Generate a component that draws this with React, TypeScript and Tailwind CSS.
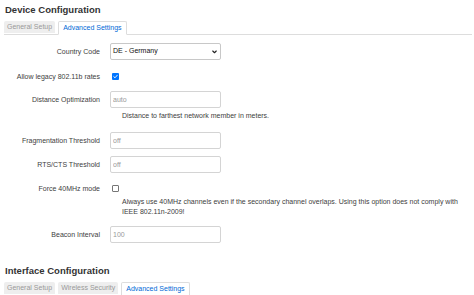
import React from 'react';

type TabsProps = {
    tabs: string[];
    active: number;
};

const Tabs: React.FC<TabsProps> = ({ tabs, active }) => (
    <div className="ml-[4px] mr-[2px] flex h-[14px] items-end gap-[3px] border-b border-[#ddd]">
        {tabs.map((tab, i) =>
            i === active ? (
                <div key={tab} className="-mb-px h-[14px] rounded-t-[2px] border border-[#ddd] border-b-white bg-white px-[4px] text-[7px] leading-[12px] text-[#0069d6]">
                    {tab}
                </div>
            ) : (
                <div key={tab} className="mb-px h-[12px] rounded-t-[2px] bg-[#eee] px-[3px] text-[7px] leading-[12px] text-[#999]">
                    {tab}
                </div>
            )
        )}
    </div>
);

const Label: React.FC<{ children: React.ReactNode }> = ({ children }) => (
    <div className="w-[100px] shrink-0 text-right text-[7px] leading-[10px] text-[#404040]">{children}</div>
);

const TextField: React.FC<{ placeholder: string }> = ({ placeholder }) => (
    <input
        type="text"
        readOnly
        placeholder={placeholder}
        className="h-[17px] w-[111px] rounded-[2px] border border-[#d4d4d4] bg-white px-[2px] text-[7px] text-[#404040] outline-none placeholder:text-[#999]"
    />
);

const Checkbox: React.FC<{ checked?: boolean }> = ({ checked }) =>
    checked ? (
        <div className="ml-[2px] flex h-[7px] w-[7px] items-center justify-center rounded-[1px] bg-[#0075ff]">
            <svg width="5" height="5" viewBox="0 0 10 10" fill="none">
                <path d="M1.5 5.2 L4 7.6 L8.6 2.4" stroke="white" strokeWidth="1.8" strokeLinecap="round" strokeLinejoin="round" />
            </svg>
        </div>
    ) : (
        <div className="ml-[2px] h-[7px] w-[7px] rounded-[1px] border border-[#767676] bg-white" />
    );

const Row: React.FC<{ label: string; className?: string; children: React.ReactNode }> = ({ label, className, children }) => (
    <div className={`flex items-center gap-[10px] ${className ?? ''}`}>
        <Label>{label}</Label>
        {children}
    </div>
);

export default function App() {
    return (
        <div className="h-[295px] w-[474px] overflow-hidden bg-white font-['Liberation_Sans',Arial,sans-serif] text-[#404040]">
            <h2 className="pl-[5px] pt-[3px] text-[9.5px] font-bold leading-[14px] text-[#333]">Device Configuration</h2>
            <div className="mt-[4px]">
                <Tabs tabs={['General Setup', 'Advanced Settings']} active={1} />
            </div>

            <Row label="Country Code" className="mt-[8px] h-[17px]">
                <div className="flex h-[17px] w-[111px] items-center justify-between rounded-[2px] border border-[#c8c8c8] bg-white pl-[2px] pr-[3px] text-[7px] text-[#111]">
                    <span>DE - Germany</span>
                    <svg width="5" height="4" viewBox="0 0 10 8" fill="none">
                        <path d="M1.5 2 L5 5.5 L8.5 2" stroke="#222" strokeWidth="2.2" strokeLinecap="round" strokeLinejoin="round" />
                    </svg>
                </div>
            </Row>

            <Row label="Allow legacy 802.11b rates" className="mt-[8px] h-[17px]">
                <Checkbox checked />
            </Row>

            <Row label="Distance Optimization" className="mt-[6px] h-[17px]">
                <TextField placeholder="auto" />
            </Row>
            <div className="mt-[3px] pl-[122px] text-[7px] leading-[10px] text-[#404040]">Distance to farthest network member in meters.</div>

            <Row label="Fragmentation Threshold" className="mt-[11px] h-[17px]">
                <TextField placeholder="off" />
            </Row>

            <Row label="RTS/CTS Threshold" className="mt-[7px] h-[17px]">
                <TextField placeholder="off" />
            </Row>

            <Row label="Force 40MHz mode" className="mt-[9px] h-[13px]">
                <Checkbox />
            </Row>
            <div className="mt-[2px] pl-[122px] text-[7px] leading-[10px] text-[#404040]">
                <div className="whitespace-nowrap">Always use 40MHz channels even if the secondary channel overlaps. Using this option does not comply with</div>
                <div className="whitespace-nowrap">IEEE 802.11n-2009!</div>
            </div>

            <Row label="Beacon Interval" className="mt-[9px] h-[17px]">
                <TextField placeholder="100" />
            </Row>

            <h2 className="mt-[21px] pl-[5px] text-[9.5px] font-bold leading-[14px] text-[#333]">Interface Configuration</h2>
            <div className="mt-[4px]">
                <Tabs tabs={['General Setup', 'Wireless Security', 'Advanced Settings']} active={2} />
            </div>
        </div>
    );
}
